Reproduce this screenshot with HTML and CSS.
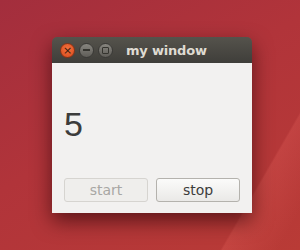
FILE: index.html
```html
<!DOCTYPE html>
<html lang="en">
<head>
  <meta charset="UTF-8" />
  <title>my window</title>
  <link rel="stylesheet" href="styles.css">
</head>
<body>

  <div class="window">
    <div class="titlebar">
      <div class="controls">
        <span class="btn close">×</span>
        <span class="btn min"><i class="dash"></i></span>
        <span class="btn max"><i class="box"></i></span>
      </div>
      <div class="title">my window</div>
    </div>

    <div class="content">
      <div class="count">5</div>
      <div class="actions">
        <button class="action" disabled>start</button>
        <button class="action">stop</button>
      </div>
    </div>
  </div>

</body>
</html>
```

FILE: styles.css
```css
* { box-sizing: border-box; margin: 0; padding: 0; }

html, body { width: 300px; height: 250px; overflow: hidden; }

body {
  font-family: "DejaVu Sans", sans-serif;
  background:
    linear-gradient(120deg, transparent 82%, rgba(255, 120, 110, 0.18) 82.5%, transparent 95%),
    linear-gradient(150deg, #a32e3d 0%, #b1343a 45%, #b93b36 100%);
  padding: 37px 0 0 52px;
}

.window {
  width: 200px; height: 176px;
  border-radius: 5px 5px 0 0;
  overflow: hidden;
  display: flex; flex-direction: column;
  box-shadow: 0 8px 20px rgba(35, 0, 5, 0.6);
}

.titlebar {
  height: 26px;
  background: linear-gradient(#55534c, #3f3e3a);
  display: flex; align-items: center;
  padding-left: 8px;
}

.controls { display: flex; gap: 4px; }

.btn {
  width: 15px; height: 15px; border-radius: 50%;
  display: flex; align-items: center; justify-content: center;
  background: linear-gradient(#87857f, #5f5d58);
  border: 1px solid #3a3936;
}

.btn.close {
  background: radial-gradient(circle at 50% 40%, #f4743f, #d9481c);
  border-color: #8a3316;
  color: #3b1a0e; font-size: 11px; line-height: 1;
}

.dash { width: 7px; height: 1.5px; background: #35342f; }
.box { width: 7px; height: 7px; border: 1px solid #35342f; border-radius: 1px; }

.title {
  margin-left: 13px;
  color: #dfdbd2;
  font-weight: bold; font-size: 13px;
  letter-spacing: -0.2px;
}

.content {
  flex: 1;
  background: #f2f1f0;
  display: flex; flex-direction: column;
  padding: 0 12px 11px 12px;
}

.count {
  flex: 1;
  display: flex; align-items: center;
  padding-top: 8px;
  font-family: "Liberation Sans", sans-serif;
  font-size: 34px; color: #3c3c3c;
}

.actions { display: flex; gap: 8px; }

.action {
  flex: 1; height: 24px;
  font-family: "DejaVu Sans", sans-serif;
  font-size: 14px; color: #3c3c3c;
  background: linear-gradient(#fbfbfa, #eae9e7);
  border: 1px solid #b4b2ad; border-radius: 3px;
}

.action:disabled {
  color: #a8a7a4;
  background: #efeeec;
  border-color: #d6d4d0;
}
```
